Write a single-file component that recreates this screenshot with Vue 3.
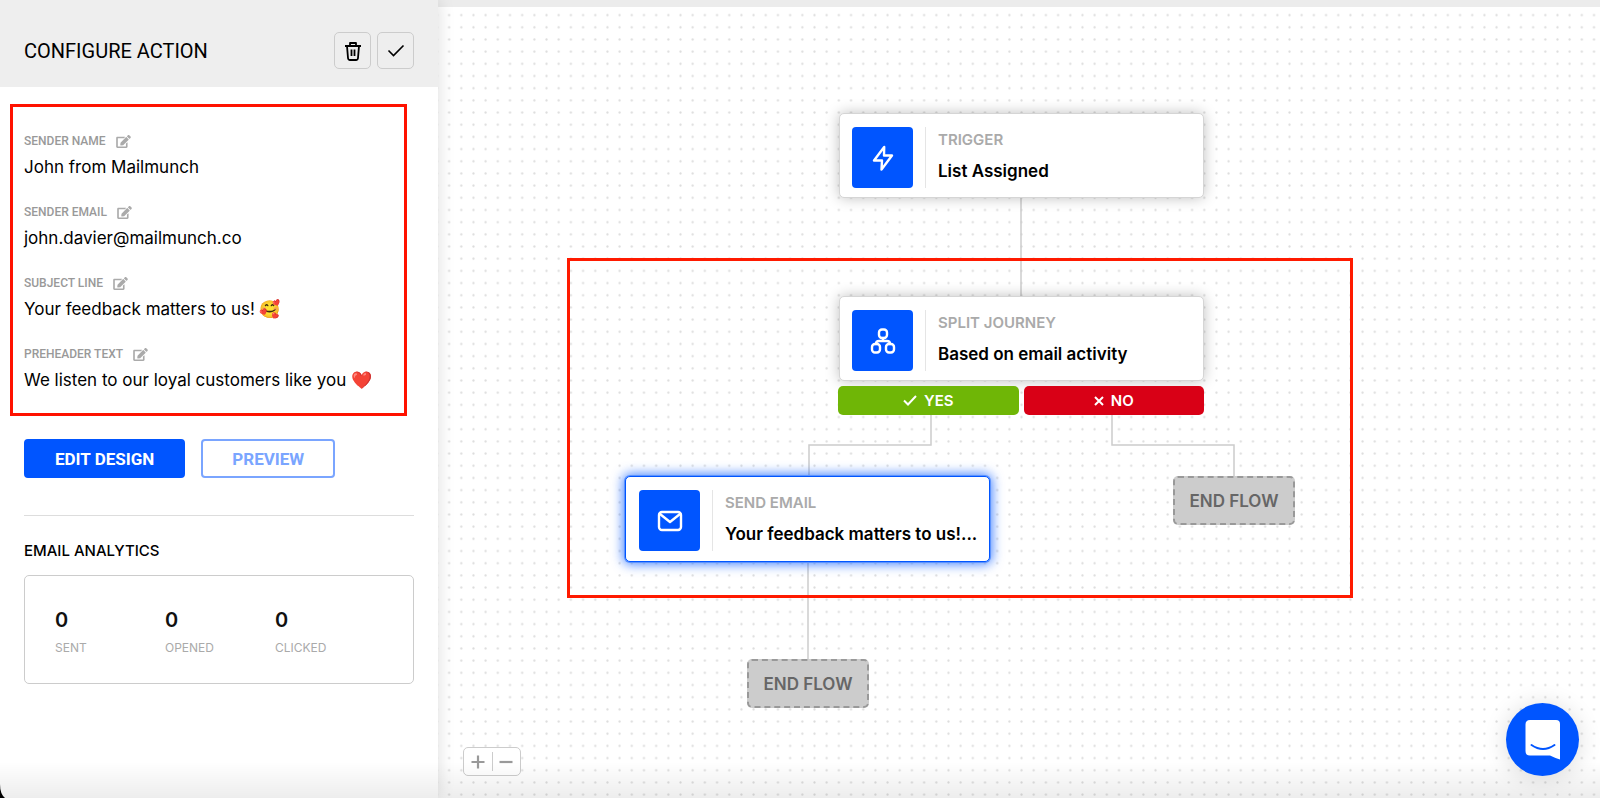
<script setup>
const fields = [
  { id: 'sender-name', label: 'SENDER NAME', value: 'John from Mailmunch' },
  { id: 'sender-email', label: 'SENDER EMAIL', value: 'john.davier@mailmunch.co' },
  { id: 'subject', label: 'SUBJECT LINE', value: 'Your feedback matters to us! 🥰' },
  { id: 'preheader', label: 'PREHEADER TEXT', value: 'We listen to our loyal customers like you ❤️' }
]

const stats = [
  { label: 'SENT', value: 0 },
  { label: 'OPENED', value: 0 },
  { label: 'CLICKED', value: 0 }
]

// node positions on the flow canvas
const nodes = [
  { id: 'trigger', type: 'TRIGGER', title: 'List Assigned', icon: 'bolt', x: 290, y: 106 },
  { id: 'split', type: 'SPLIT JOURNEY', title: 'Based on email activity', icon: 'split', x: 290, y: 289 },
  { id: 'email', type: 'SEND EMAIL', title: 'Your feedback matters to us!...', icon: 'mail', x: 76, y: 469, selected: true }
]

const ends = [
  { id: 'end-no', x: 624, y: 469 },
  { id: 'end-email', x: 198, y: 652 }
]

const edges = [
  'M472 190V290',
  'M382 408V438H260V470',
  'M563 408V438H685V470',
  'M259 554V653'
]

const at = (n) => ({ left: n.x + 'px', top: n.y + 'px' })
</script>

<template>
  <div class="app">
    <aside class="sidebar">
      <header class="head">
        <h1>CONFIGURE ACTION</h1>
        <div class="tools">
          <button class="tool" aria-label="Delete">
            <svg width="18" height="20" viewBox="0 0 18 20" fill="none" stroke="#000" stroke-width="1.800" stroke-linejoin="round">
              <path d="M1 5h16M6 5V2h6v3M3 5l1 12q.2 2 2 2h6q1.800 0 2-2l1-12M7.500 8.500v6.500M10.500 8.500v6.500" />
            </svg>
          </button>
          <button class="tool" aria-label="Save">
            <svg width="18" height="14" viewBox="0 0 18 14" fill="none" stroke="#000" stroke-width="1.600">
              <path d="M1.500 6.500l5 5L16.500 1.500" />
            </svg>
          </button>
        </div>
      </header>

      <section class="fields">
        <div v-for="f in fields" :key="f.id" class="field">
          <div class="field-label">
            <span>{{ f.label }}</span>
            <button class="edit" :aria-label="'Edit ' + f.label">
              <svg width="15" height="13" viewBox="0 0 576 512" fill="#aaa">
                <path d="M402.600 83.200l90.200 90.200c3.800 3.800 3.800 10 0 13.800L274.400 405.600l-92.800 10.300c-12.400 1.400-22.900-9.100-21.500-21.500l10.300-92.800L388.800 83.200c3.800-3.800 10-3.800 13.800 0zm162-22.900l-48.800-48.800c-15.200-15.200-39.900-15.200-55.200 0l-35.400 35.400c-3.800 3.800-3.800 10 0 13.800l90.200 90.200c3.800 3.800 10 3.800 13.800 0l35.400-35.400c15.200-15.300 15.200-40 0-55.200zM384 346.200V448H64V128h229.800c3.200 0 6.200-1.300 8.500-3.500l40-40c7.600-7.600 2.200-20.500-8.500-20.500H48C21.500 64 0 85.500 0 112v352c0 26.500 21.500 48 48 48h352c26.500 0 48-21.500 48-48V306.200c0-10.700-12.900-16-20.500-8.500l-40 40c-2.200 2.300-3.500 5.300-3.500 8.500z" />
              </svg>
            </button>
          </div>
          <div class="field-value">{{ f.value }}</div>
        </div>
      </section>

      <div class="actions">
        <button class="btn btn-primary">EDIT DESIGN</button>
        <button class="btn btn-outline">PREVIEW</button>
      </div>

      <section class="analytics">
        <h2>EMAIL ANALYTICS</h2>
        <div class="stats">
          <div v-for="s in stats" :key="s.label" class="stat">
            <strong>{{ s.value }}</strong>
            <span>{{ s.label }}</span>
          </div>
        </div>
      </section>
    </aside>

    <main class="canvas">
      <svg class="grid" width="100%" height="100%">
        <defs>
          <pattern id="dots" width="10" height="10" patternUnits="userSpaceOnUse" patternTransform="translate(5 2) scale(1.218)">
            <circle cx="5" cy="5" r="0.900" fill="#dcdcdc" />
          </pattern>
        </defs>
        <rect width="100%" height="100%" fill="url(#dots)" />
      </svg>

      <div class="flow">
        <svg class="edges" width="940" height="720" fill="none" stroke="#ccc" stroke-width="1.500">
          <path v-for="d in edges" :key="d" :d="d" />
        </svg>

        <div v-for="n in nodes" :key="n.id" class="node" :class="{ selected: n.selected }" :style="at(n)">
          <div class="node-icon">
            <svg width="26" height="26" viewBox="0 0 26 26" fill="none" stroke="#fff" stroke-width="2.400" stroke-linejoin="round" stroke-linecap="round">
              <path v-if="n.icon === 'bolt'" d="M14.200 2L4 15.500h8L11.500 24.500L22 10.500h-8z" />
              <template v-else-if="n.icon === 'split'">
                <rect x="9" y="1.500" width="8" height="8.500" rx="3" />
                <rect x="2" y="16" width="8" height="8.500" rx="3" />
                <rect x="16" y="16" width="8" height="8.500" rx="3" />
                <path d="M13 10v3M6 16q0-3 3-3h8q3 0 3 3" />
              </template>
              <template v-else>
                <rect x="2" y="4" width="22" height="18" rx="3" />
                <path d="M3 6l10 8L23 6" />
              </template>
            </svg>
          </div>
          <div class="node-text">
            <span class="node-type">{{ n.type }}</span>
            <span class="node-title">{{ n.title }}</span>
          </div>
        </div>

        <div class="branches">
          <div class="branch yes">
            <svg width="14" height="11" viewBox="0 0 14 11" fill="none" stroke="#fff" stroke-width="2">
              <path d="M1 5.500l4 4L13 1" />
            </svg>
            YES
          </div>
          <div class="branch no">
            <svg width="10" height="10" viewBox="0 0 10 10" fill="none" stroke="#fff" stroke-width="2">
              <path d="M1 1l8 8M9 1l-8 8" />
            </svg>
            NO
          </div>
        </div>

        <div v-for="e in ends" :key="e.id" class="end" :style="at(e)">END FLOW</div>
        <div class="highlight"></div>
      </div>

      <div class="zoom">
        <button aria-label="Zoom in">
          <svg width="14" height="14" viewBox="0 0 14 14" stroke="#999" stroke-width="2.200"><path d="M7 .500v13M.500 7h13" /></svg>
        </button>
        <button aria-label="Zoom out">
          <svg width="14" height="14" viewBox="0 0 14 14" stroke="#999" stroke-width="2.200"><path d="M.500 7h13" /></svg>
        </button>
      </div>
    </main>

    <div class="fade"></div>
    <svg class="corner" width="5" height="14" viewBox="0 0 5 14"><path d="M0 0q0 10 5 14H0z" /></svg>

    <button class="chat" aria-label="Open chat">
      <svg width="36" height="40" viewBox="0 0 36 40">
        <path d="M5 0h26q4 0 4 4v35.500q-5-1.500-10-4H5q-4.500 0-4.500-4.500V4.500Q.500 0 5 0z" fill="#fff" />
        <path d="M6.500 25q11.500 8 23 0" fill="none" stroke="#0055ff" stroke-width="2" stroke-linecap="round" />
      </svg>
    </button>
  </div>
</template>

<style>
body {
  background: #fff;
}
</style>

<style scoped>
.app {
  position: relative;
  display: flex;
  min-height: 100vh;
  overflow: hidden;
  font-family: Inter, "Noto Color Emoji", sans-serif;
  color: #000;
}
.app * { box-sizing: border-box; }
button {
  font-family: inherit;
  cursor: pointer;
  padding: 0;
}
svg { display: block; }

.sidebar {
  position: relative;
  z-index: 1;
  flex: 0 0 438px;
  background: #fff;
  box-shadow: 0 0 16px rgba(0, 0, 0, 0.14);
}
.head {
  display: flex;
  align-items: center;
  justify-content: space-between;
  height: 87px;
  padding: 14px 24px 0;
  background: #eee;
}
h1 {
  margin: 0;
  font: 400 20px/24px Roboto, sans-serif;
}
.tools { display: flex; gap: 6px; }
.tool {
  display: grid;
  place-items: center;
  width: 37px;
  height: 37px;
  border: 1px solid #ccc;
  border-radius: 5px;
  background: none;
}

.fields {
  display: flex;
  flex-direction: column;
  gap: 24px;
  margin: 17px 31px 0 10px;
  padding: 25px 11px 21px;
  border: 3px solid #ff1100;
}
.field-label {
  display: flex;
  align-items: center;
  gap: 10px;
  height: 18px;
  font: 500 12px/18px Roboto, sans-serif;
  color: #999;
}
.edit {
  border: 0;
  background: none;
}
.field-value {
  padding-top: 5px;
  font-size: 17px;
  line-height: 24px;
  white-space: nowrap;
}

.actions {
  display: flex;
  gap: 16px;
  padding: 23px 24px 37px;
}
.btn {
  height: 39px;
  padding: 0 29px;
  border: 2px solid #0055ff;
  border-radius: 4px;
  font: 700 17px/20px Roboto, sans-serif;
}
.btn-primary {
  background: #0055ff;
  color: #fff;
}
.btn-outline {
  border-color: #7aa5ff;
  background: #fff;
  color: #7aa5ff;
}

.analytics {
  margin: 0 24px;
  border-top: 1px solid #ddd;
}
h2 {
  margin: 25px 0 14px;
  font-size: 15px;
  line-height: 20px;
  font-weight: 500;
}
.stats {
  display: flex;
  height: 109px;
  padding: 32px 0 32px 30px;
  border: 1px solid #ccc;
  border-radius: 5px;
}
.stat {
  display: flex;
  flex-direction: column;
  gap: 7px;
  width: 110px;
}
.stat strong {
  font-size: 20px;
  line-height: 24px;
  font-weight: 600;
  color: #111;
}
.stat span {
  font-size: 12px;
  line-height: 18px;
  color: #aaa;
}

.canvas {
  position: relative;
  flex: 1;
  min-width: 0;
  border-top: 7px solid #ececec;
  background: #fff;
}
.grid, .edges {
  position: absolute;
  top: 0;
  left: 0;
}
.flow {
  position: relative;
  width: 940px;
  height: 720px;
  margin: 0 auto;
}
.node {
  position: absolute;
  display: flex;
  gap: 12px;
  width: 365px;
  height: 85px;
  padding: 13px 12px 10px;
  border: 1px solid #d5d5d5;
  border-radius: 5px;
  background: #fff;
  box-shadow: 0 0 14px rgba(0, 0, 0, 0.25);
}
.node.selected {
  height: 86px;
  padding-left: 13px;
  border-color: #0055ff;
  box-shadow: 0 0 0 1px #5c93ff, 0 0 12px 2px rgba(0, 85, 255, 0.75);
}
.node-icon {
  display: grid;
  place-items: center;
  flex: 0 0 61px;
  height: 61px;
  border-radius: 4px;
  background: #0055ff;
}
.node-text {
  display: flex;
  flex-direction: column;
  height: 61px;
  padding: 2px 0 0 12px;
  border-left: 1px solid #e5e5e5;
  font-weight: 600;
  white-space: nowrap;
}
.node-type {
  font-size: 15px;
  line-height: 22px;
  color: #aaa;
}
.node-title {
  padding-top: 8px;
  font-size: 17px;
  line-height: 24px;
}
.branches {
  position: absolute;
  top: 379px;
  left: 289px;
  display: flex;
  gap: 5px;
  width: 366px;
}
.branch {
  display: flex;
  flex: 1;
  align-items: center;
  justify-content: center;
  gap: 7px;
  height: 29px;
  border-radius: 5px;
  font-size: 15px;
  font-weight: 600;
  color: #fff;
}
.yes { background: #6fb606; }
.no { background: #d90016; }
.end {
  position: absolute;
  display: grid;
  place-items: center;
  width: 122px;
  height: 49px;
  border: 2px dashed #999;
  border-radius: 5px;
  background: #ccc;
  font-size: 17px;
  font-weight: 600;
  color: #666;
}
.highlight {
  position: absolute;
  top: 251px;
  left: 18px;
  width: 786px;
  height: 340px;
  border: 3px solid #ff1a00;
}

.zoom {
  position: absolute;
  left: 25px;
  bottom: 22px;
  display: flex;
  width: 58px;
  height: 29px;
  padding: 4px 0;
  border: 1px solid #ccc;
  border-radius: 5px;
  background: #fff;
}
.zoom button {
  display: grid;
  place-items: center;
  flex: 1;
  border: 0;
  background: none;
}
.zoom button + button { border-left: 1px solid #ccc; }

.fade {
  position: absolute;
  z-index: 2;
  left: 0;
  right: 0;
  bottom: 0;
  height: 36px;
  background: linear-gradient(rgba(0, 0, 0, 0), rgba(0, 0, 0, 0.07));
  pointer-events: none;
}
.corner {
  position: absolute;
  z-index: 2;
  left: 0;
  bottom: 0;
}
.chat {
  position: absolute;
  z-index: 3;
  right: 21px;
  bottom: 22px;
  display: grid;
  place-items: center;
  width: 73px;
  height: 73px;
  border: 0;
  border-radius: 50%;
  background: #0055ff;
  box-shadow: 0 2px 24px rgba(0, 0, 0, 0.14);
}
</style>
